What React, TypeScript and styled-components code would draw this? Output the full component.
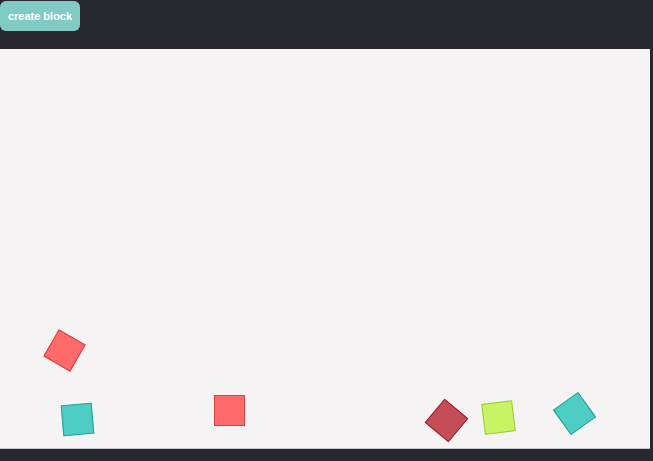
import React from "react";
import styled, { createGlobalStyle } from "styled-components";

const Global = createGlobalStyle`
  html, body { margin: 0; padding: 0; background: #28292e; }
  body { font-family: "Liberation Sans", Arial, sans-serif; }
`;

const Page = styled.div`
  display: flex;
  flex-direction: column;
  align-items: flex-start;
  padding-top: 1px;
  height: 461px;
  box-sizing: border-box;
`;

const Toolbar = styled.div`
  display: flex;
  height: 48px;
`;

const Button = styled.button`
  height: 30px;
  width: 80px;
  padding: 0;
  border: none;
  border-radius: 6px;
  background: #80cbc4;
  color: #ffffff;
  font-family: "Liberation Sans", Arial, sans-serif;
  font-weight: bold;
  font-size: 11px;
  cursor: pointer;
`;

const Canvas = styled.div`
  position: relative;
  width: 650px;
  height: 399px;
  background: #f5f3f4;
  border-bottom: 1px solid #c8c8c8;
  overflow: hidden;
`;

const Block = styled.div<{ $fill: string; $stroke: string }>`
  position: absolute;
  width: 29px;
  height: 29px;
  background: ${(p) => p.$fill};
  border: 1px solid ${(p) => p.$stroke};
`;

const blocks = [
  { cx: 64.3, cy: 350.8, r: 30, fill: "#ff6b6b", stroke: "#d9403f" },
  { cx: 77.3, cy: 419.7, r: -5, fill: "#4ecdc4", stroke: "#279c93" },
  { cx: 229, cy: 410, r: 0, fill: "#ff6b6b", stroke: "#d9403f" },
  { cx: 446.8, cy: 420.3, r: 40, fill: "#c44d58", stroke: "#9a1f2c" },
  { cx: 498.3, cy: 417.3, r: -7, fill: "#c7f464", stroke: "#9ccb3a" },
  { cx: 574.3, cy: 413, r: -35.5, fill: "#4ecdc4", stroke: "#279c93" },
];

export default function App() {
  return (
    <>
      <Global />
      <Page>
        <Toolbar>
          <Button>create block</Button>
        </Toolbar>
        <Canvas>
          {blocks.map((b, i) => (
            <Block
              key={i}
              $fill={b.fill}
              $stroke={b.stroke}
              style={{
                left: b.cx - 15.5,
                top: b.cy - 49 - 15.5,
                transform: `rotate(${b.r}deg)`,
              }}
            />
          ))}
        </Canvas>
      </Page>
    </>
  );
}
